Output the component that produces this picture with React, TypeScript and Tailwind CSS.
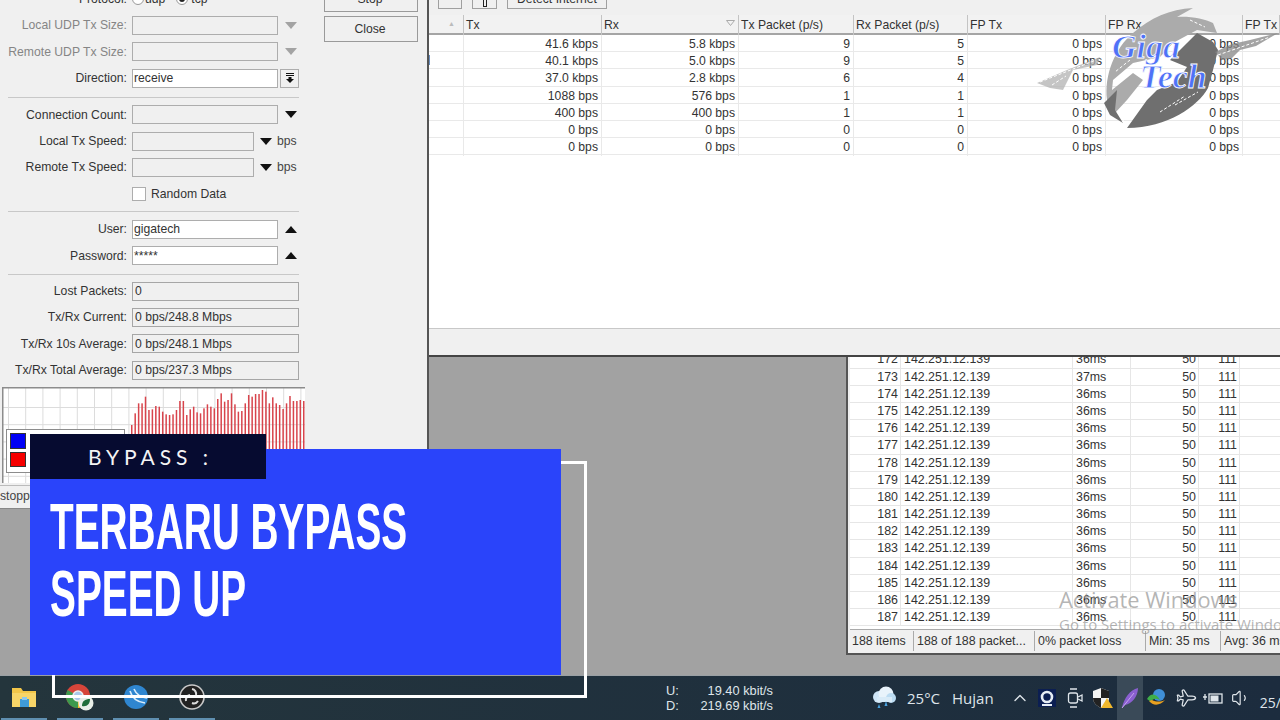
import { ChevronUp, Plane, Volume1 } from "lucide-react";

const trafficRows = [
  ["41.6 kbps", "5.8 kbps", "9", "5", "0 bps", "0 bps"],
  ["40.1 kbps", "5.0 kbps", "9", "5", "0 bps", "0 bps"],
  ["37.0 kbps", "2.8 kbps", "6", "4", "0 bps", "0 bps"],
  ["1088 bps", "576 bps", "1", "1", "0 bps", "0 bps"],
  ["400 bps", "400 bps", "1", "1", "0 bps", "0 bps"],
  ["0 bps", "0 bps", "0", "0", "0 bps", "0 bps"],
  ["0 bps", "0 bps", "0", "0", "0 bps", "0 bps"],
];

const pingRows = Array.from({ length: 16 }, (_, i) => ({
  seq: 172 + i,
  time: i === 1 ? "37ms" : "36ms",
}));

const barTops = [
  135, 100, 70, 70, 50, 90, 88, 78, 80, 95, 103, 105, 103, 90, 63, 63, 105, 88, 80, 97, 100, 85, 73, 80, 85, 57,
  40, 65, 60, 40, 73, 95, 93, 70, 45, 50, 42, 42, 30, 35, 70, 52, 70, 75, 87, 70, 48, 63, 63, 60, 63,
];

function Label({ children, muted }: { children: string; muted?: boolean }) {
  return (
    <span className={`w-[127px] shrink-0 whitespace-nowrap text-right ${muted ? "text-[#858585]" : "text-[#333]"}`}>
      {children}
    </span>
  );
}

function Arrow({ up, muted }: { up?: boolean; muted?: boolean }) {
  return (
    <svg width="12" height="7" viewBox="0 0 12 7" className="shrink-0">
      <path d={up ? "M0 7L6 0L12 7Z" : "M0 0L12 0L6 7Z"} fill={muted ? "#a3a3a3" : "#111"} />
    </svg>
  );
}

function FieldRow({
  label,
  value,
  muted,
  short,
  arrow,
  up,
}: {
  label: string;
  value?: string;
  muted?: boolean;
  short?: boolean;
  arrow?: boolean;
  up?: boolean;
}) {
  const filled = value !== undefined;
  return (
    <div className="flex h-[26.4px] items-center">
      <Label muted={muted}>{label}</Label>
      <div
        className={`ml-[5px] flex h-[19px] items-center border border-[#adadad] pl-[1px] ${short ? "w-[122px]" : "w-[146px]"} ${filled ? "bg-white" : "bg-[#f0f0f0]"}`}
      >
        {value}
      </div>
      {arrow && (
        <span className={short ? "ml-[6px]" : "ml-[7px]"}>
          <Arrow up={up} muted={muted} />
        </span>
      )}
      {short && <span className="ml-[5px] text-[#444]">bps</span>}
    </div>
  );
}

function ReadRow({ label, value }: { label: string; value: string }) {
  return (
    <div className="flex h-[26.4px] items-center">
      <Label>{label}</Label>
      <div className="ml-[5px] flex h-[19px] w-[167px] items-center border border-[#a6a6a6] bg-[#f0f0f0] pl-[2px] text-[#333]">
        {value}
      </div>
    </div>
  );
}

function Separator({ className }: { className: string }) {
  return <div className={`ml-[8px] h-px w-[291px] bg-[#c8c8c8] ${className}`} />;
}

function TrafficChart() {
  return (
    <svg width="303" height="96" viewBox="0 0 303 96" className="ml-[2px] mt-[4px] block bg-white">
      {Array.from({ length: 18 }, (_, i) => (
        <line key={i} x1={6.5 + i * 17.2} x2={6.5 + i * 17.2} y1="0" y2="96" stroke="#dcdcdc" />
      ))}
      {Array.from({ length: 5 }, (_, i) => (
        <line key={i} x1="0" x2="303" y1={20.5 + i * 17.2} y2={20.5 + i * 17.2} stroke="#dcdcdc" />
      ))}
      {barTops.map((top, i) => (
        <rect key={i} x={129 + i * 3.44} y={top / 3 - 7} width="1.5" height={96 - top / 3 + 7} fill="#d8444c" />
      ))}
      <rect x="1" y="0" width="302" height="1.5" fill="#8c8c8c" />
      <rect x="0" y="0" width="1.5" height="96" fill="#8c8c8c" />
      <rect x="4.5" y="42.5" width="118" height="43" fill="#fff" stroke="#8c8c8c" />
      <rect x="8.5" y="46.5" width="15" height="15" fill="#0000f5" stroke="#333" />
      <rect x="8.5" y="65.5" width="15" height="14" fill="#f50000" stroke="#333" />
    </svg>
  );
}

function LeftWindow() {
  return (
    <div className="absolute left-0 top-0 flex h-[509px] w-[429px] overflow-hidden border-b border-r-2 border-b-[#888] border-r-[#555] bg-[#f0f0f0] text-[12.2px] text-[#333]">
      <div className="w-[305px] shrink-0">
        <div className="-mt-[14px] flex h-[26.4px] items-center">
          <Label>Protocol:</Label>
          <span className="ml-[5px] h-[12px] w-[12px] rounded-full border border-[#999] bg-white" />
          <span className="ml-[1px]">udp</span>
          <span className="ml-[11px] flex h-[12px] w-[12px] items-center justify-center rounded-full border border-[#999] bg-white">
            <span className="h-[6px] w-[6px] rounded-full bg-[#222]" />
          </span>
          <span className="ml-[3px]">tcp</span>
        </div>
        <FieldRow label="Local UDP Tx Size:" muted arrow />
        <FieldRow label="Remote UDP Tx Size:" muted arrow />
        <div className="flex h-[26.4px] items-center">
          <Label>Direction:</Label>
          <div className="ml-[5px] flex h-[19px] w-[146px] items-center border border-[#adadad] bg-white pl-[1px]">
            receive
          </div>
          <div className="ml-[2px] flex h-[19px] w-[19px] items-center justify-center border border-[#adadad]">
            <svg width="10" height="10" viewBox="0 0 10 10">
              <path d="M1 0.5H9M1 2.5H9" stroke="#111" />
              <path d="M3.5 4H6.5V6H9L5 10L1 6H3.5Z" fill="#111" />
            </svg>
          </div>
        </div>
        <Separator className="mb-[4px] mt-[5px]" />
        <FieldRow label="Connection Count:" arrow />
        <FieldRow label="Local Tx Speed:" short arrow />
        <FieldRow label="Remote Tx Speed:" short arrow />
        <div className="flex h-[26.4px] items-center pl-[132px]">
          <span className="h-[14px] w-[14px] border border-[#adadad] bg-white" />
          <span className="ml-[5px]">Random Data</span>
        </div>
        <Separator className="mb-[4px] mt-[4px]" />
        <FieldRow label="User:" value="gigatech" arrow up />
        <FieldRow label="Password:" value="*****" arrow up />
        <Separator className="mb-[3px] mt-[5px]" />
        <ReadRow label="Lost Packets:" value="0" />
        <ReadRow label="Tx/Rx Current:" value="0 bps/248.8 Mbps" />
        <ReadRow label="Tx/Rx 10s Average:" value="0 bps/248.1 Mbps" />
        <ReadRow label="Tx/Rx Total Average:" value="0 bps/237.3 Mbps" />
        <TrafficChart />
        <div className="mt-[2px] border-t border-[#bbb] leading-[20px] text-[#444]">stopped</div>
      </div>
      <div className="ml-[19px] flex w-[94px] shrink-0 flex-col gap-[4px]">
        <button className="-mt-[14px] h-[26px] border border-[#9a9a9a] bg-[#f0f0f0] pr-[2px] text-center">Stop</button>
        <button className="h-[26px] border border-[#9a9a9a] bg-[#f0f0f0] pr-[2px] text-center">Close</button>
      </div>
    </div>
  );
}

const headers = ["Tx", "Rx", "Tx Packet (p/s)", "Rx Packet (p/s)", "FP Tx", "FP Rx", "FP Tx"];
const cols = "grid grid-cols-[35px_138px_137px_115px_114px_138px_137px_37px]";

function TopWindow() {
  return (
    <div className="absolute left-[429px] top-0 flex h-[357px] w-[851px] flex-col overflow-hidden border-b-2 border-[#444] bg-[#f0f0f0] text-[12.2px] text-[#333]">
      <div className="flex h-[15px] items-end gap-[10px] pb-[6px] pl-[9px]">
        <div className="h-[24px] w-[24px] shrink-0 border border-[#a0a0a0]" />
        <div className="flex h-[24px] w-[25px] shrink-0 items-end justify-center border border-[#a0a0a0]">
          <span className="mb-[1px] h-[8px] w-[4px] border border-[#222]" />
        </div>
        <div className="flex h-[24px] w-[100px] shrink-0 items-end justify-center border border-[#a0a0a0] pb-[2px] leading-[14px]">
          Detect Internet
        </div>
      </div>
      <div className="flex h-[313px] flex-col bg-white">
        <div className={`${cols} h-[20px] border-b-2 border-[#a5a5a5] bg-[#f2f2f2] leading-[20px]`}>
          <div className="relative border-r border-[#c4c4c4]">
            <span className="absolute right-[8px] top-[5px] text-[7px] leading-none text-[#bbb]">▲</span>
          </div>
          {headers.map((h, i) => (
            <div key={i} className="relative whitespace-nowrap border-r border-[#c4c4c4] pl-[2px]">
              {h}
              {i === 1 && (
                <svg width="9" height="6" viewBox="0 0 9 6" className="absolute right-[3px] top-[5px]">
                  <path d="M0.5 0.5H8.5L4.5 5.5Z" fill="none" stroke="#aaa" />
                </svg>
              )}
            </div>
          ))}
        </div>
        {trafficRows.map((row, r) => (
          <div key={r} className={`${cols} h-[17.2px] border-b border-[#e9e9e9] leading-[18px]`}>
            <div className="relative border-r border-[#e9e9e9]">
              {r === 1 && <span className="absolute -left-[1px] top-[3px] h-[10px] w-[2px] bg-[#6a8fc0]" />}
            </div>
            {row.map((cell, i) => (
              <div key={i} className="border-r border-[#e9e9e9] pr-[3px] text-right">
                {cell}
              </div>
            ))}
            <div />
          </div>
        ))}
      </div>
      <div className="flex-1 border-t border-[#c8c8c8]" />
    </div>
  );
}

function PingWindow() {
  return (
    <div className="absolute left-[846px] top-[357px] flex h-[298px] w-[434px] flex-col overflow-hidden border-b-2 border-l-2 border-[#555] bg-[#f0f0f0] pl-[2px] text-[12.4px] text-[#333]">
      <div className="h-[272px] shrink-0 overflow-hidden bg-white">
        <div className="-mt-[5.6px]">
          {pingRows.map((row) => (
            <div
              key={row.seq}
              className="grid h-[17.2px] grid-cols-[51px_172px_58px_68px_41px] border-b border-[#e6e6e6] leading-[17px]"
            >
              <div className="border-r border-[#e6e6e6] pr-[2px] text-right">{row.seq}</div>
              <div className="border-r border-[#e6e6e6] pl-[3px]">142.251.12.139</div>
              <div className="border-r border-[#e6e6e6] pl-[3px]">{row.time}</div>
              <div className="border-r border-[#e6e6e6] pr-[2px] text-right">50</div>
              <div className="border-r border-[#e6e6e6] pr-[2px] text-right">111</div>
            </div>
          ))}
        </div>
      </div>
      <div className="flex h-[22px] items-center border-t border-[#aaa] leading-[20px] text-[#333]">
        <span className="w-[64px] shrink-0 whitespace-nowrap border-r border-[#aaa] pl-[2px]">188 items</span>
        <span className="w-[121px] shrink-0 whitespace-nowrap border-r border-[#aaa] pl-[3px]">188 of 188 packet...</span>
        <span className="w-[111px] shrink-0 whitespace-nowrap border-r border-[#aaa] pl-[3px]">0% packet loss</span>
        <span className="w-[75px] shrink-0 whitespace-nowrap border-r border-[#aaa] pl-[3px]">Min: 35 ms</span>
        <span className="whitespace-nowrap pl-[3px]">Avg: 36 ms</span>
      </div>
    </div>
  );
}

function Watermark() {
  return (
    <svg viewBox="1030 0 250 135" className="absolute left-[1030px] top-0 h-[135px] w-[250px]">
      <path
        d="M1107 100C1104 75 1115 48 1133 33C1150 18 1170 9 1193 8L1177 17C1190 16 1205 19 1213 23L1217 33L1197 30L1173 43L1160 57L1133 63L1113 80L1112 90L1133 73L1143 80L1127 100L1115 113Z"
        fill="#ababab"
      />
      <path d="M1037 83L1067 70L1100 57L1097 65L1073 70L1063 90L1050 88Z" fill="#b2b2b2" opacity="0.75" />
      <path
        d="M1127 128L1147 100L1157 90L1177 82L1187 67L1170 60L1187 43L1197 33L1213 42L1218 50L1213 70L1208 88C1198 106 1168 128 1127 128Z"
        fill="#6f6f6f"
      />
      <path d="M1104 103L1117 90L1115 110L1123 123L1110 115Z" fill="#6f6f6f" />
      <path d="M1215 52L1232 44L1250 40L1278 33L1256 46L1240 50L1232 58L1222 60Z" fill="#858585" opacity="0.75" />
      <path
        d="M1040 82L1096 60M1052 85L1066 76M1218 55L1270 37M1122 122L1142 96L1152 88M1130 60L1115 72M1190 20L1205 27M1175 105L1198 92M1160 112L1185 96"
        stroke="#fff"
        strokeWidth="1"
        strokeDasharray="3 2"
        fill="none"
      />
      <g
        fontFamily="'Liberation Serif', serif"
        fontWeight="700"
        fontStyle="italic"
        fontSize="34"
        fill="#4f72f7"
        stroke="#fff"
        strokeWidth="0.8"
      >
        <text x="1112" y="58">
          Giga
        </text>
        <text x="1140" y="88">
          Tech
        </text>
      </g>
    </svg>
  );
}

function ActivateNotice() {
  return (
    <div className="absolute left-[1059px] top-[586px] whitespace-nowrap font-['Open_Sans',sans-serif] text-[#949494]/70">
      <div className="text-[21.8px] leading-[28px]">Activate Windows</div>
      <div className="text-[15px] leading-[20px]">Go to Settings to activate Windows.</div>
    </div>
  );
}

function Thumbnail() {
  return (
    <>
      <div className="absolute left-[52px] top-[461px] h-[237px] w-[535px] border-[3px] border-white" />
      <div className="absolute left-[30px] top-[449px] h-[226px] w-[531px] bg-[#2a44fa] pl-[20px] pt-[44px]">
        <h1 className="origin-left scale-x-[0.597] whitespace-nowrap font-['Liberation_Sans',sans-serif] text-[65px] font-bold leading-[67px] text-white">
          TERBARU BYPASS
          <br />
          SPEED UP
        </h1>
      </div>
      <div className="absolute left-[30px] top-[434px] flex h-[45px] w-[236px] items-center bg-[#060b30] pl-[58px] font-['Lato',sans-serif] text-[21px] tracking-[0.235em] text-[#f4f4f4]">
        BYPASS :
      </div>
    </>
  );
}

function TaskIcon({ children }: { children: React.ReactNode }) {
  return (
    <div className="flex w-[46px] shrink-0 flex-col items-center justify-between self-stretch">
      <div className="mt-[8px] flex h-[26px] items-center justify-center">{children}</div>
      <div className="h-[2px] w-full bg-[#5f8fb0]" />
    </div>
  );
}

function Taskbar() {
  return (
    <div className="absolute bottom-0 left-0 flex h-[45px] w-[1280px] items-center border-t border-[#9aa0a4] bg-gradient-to-r from-[#24353c] to-[#1c2c3e] text-[#dfe5ea]">
      <div className="flex h-full shrink-0 gap-[10px] pl-[1px]">
        <TaskIcon>
          <svg width="26" height="22" viewBox="0 0 26 22">
            <path d="M1 2H10L12 5H25V21H1Z" fill="#f3c649" />
            <rect x="1" y="7" width="24" height="14" fill="#f8d568" />
            <rect x="9" y="13" width="9" height="8" fill="#3f9bd8" />
            <rect x="11" y="11" width="5" height="3" fill="#8cc7ee" />
          </svg>
        </TaskIcon>
        <TaskIcon>
          <svg width="30" height="28" viewBox="0 0 30 28">
            <circle cx="13" cy="13" r="12" fill="#d6453a" />
            <path d="M13 13L2.6 7A12 12 0 0 0 13 25Z" fill="#3c9a4e" />
            <path d="M13 13L25 13A12 12 0 0 1 13 25Z" fill="#f1c232" />
            <circle cx="13" cy="13" r="5" fill="#a9c8ea" stroke="#eee" strokeWidth="1.5" />
            <circle cx="21" cy="20" r="7.5" fill="#e8efe8" />
            <path d="M17 23C17 18 20 16 25 16C25 21 22 24 17 23Z" fill="#1f6e3a" />
          </svg>
        </TaskIcon>
        <TaskIcon>
          <svg width="24" height="24" viewBox="0 0 24 24">
            <circle cx="12" cy="12" r="12" fill="#2f86d0" />
            <path d="M6 6C8 13 13 17 21 18M10 4C12 9 15 12 23 13" stroke="#d8ecfb" strokeWidth="1.6" fill="none" />
          </svg>
        </TaskIcon>
        <TaskIcon>
          <svg width="26" height="26" viewBox="0 0 26 26">
            <circle cx="13" cy="13" r="12" fill="#222" stroke="#c9c9c9" strokeWidth="1.6" />
            <path d="M13 5A5 5 0 0 1 17 11M7 17A5 5 0 0 1 11 11M19 17A5 5 0 0 1 13 19" stroke="#ddd" strokeWidth="2" fill="none" />
          </svg>
        </TaskIcon>
      </div>
      <div className="ml-[451px] w-[107px] shrink-0 text-[12.8px] leading-[15px]">
        <div className="flex justify-between">
          <span>U:</span>
          <span>19.40 kbit/s</span>
        </div>
        <div className="flex justify-between">
          <span>D:</span>
          <span>219.69 kbit/s</span>
        </div>
      </div>
      <svg width="26" height="24" viewBox="0 0 26 24" className="ml-[98px] shrink-0">
        <circle cx="8" cy="11" r="6" fill="#cfe6f7" />
        <circle cx="15" cy="8" r="7.5" fill="#e8f3fb" />
        <circle cx="20" cy="12" r="5" fill="#bcdcf2" />
        <rect x="6" y="11" width="15" height="5" fill="#d8ebf8" />
        <path d="M8 18L9.5 22H6.5ZM15 15L16.5 20H13.5Z" fill="#4aa3e0" />
      </svg>
      <span className="ml-[10px] shrink-0 font-['Open_Sans',sans-serif] text-[15px]">25°C</span>
      <span className="ml-[12px] shrink-0 font-['Open_Sans',sans-serif] text-[15px]">Hujan</span>
      <ChevronUp className="ml-[16px] h-[20px] w-[20px] shrink-0" strokeWidth={1.6} />
      <div className="ml-[3px] flex h-full shrink-0 items-center">
        <div className="flex w-[28px] justify-center">
          <svg width="18" height="18" viewBox="0 0 18 18" className="bg-[#0b1e52]">
            <circle cx="9" cy="8" r="5" fill="none" stroke="#e6edf5" strokeWidth="2.6" />
            <path d="M4 16H14" stroke="#e6edf5" strokeWidth="2" />
          </svg>
        </div>
        <div className="flex w-[28px] justify-center">
          <svg width="16" height="20" viewBox="0 0 16 20" fill="none" stroke="#dfe5ea" strokeWidth="1.3">
            <path d="M3 1H10M3 19H10" />
            <rect x="1.5" y="5" width="9" height="10" rx="2" />
            <path d="M11 9L15 7V13L11 11" />
          </svg>
        </div>
        <div className="flex w-[28px] justify-center">
          <svg width="22" height="20" viewBox="0 0 22 20">
            <path d="M1 3L9 0L17 3V10C17 15 13 18 9 20C5 18 1 15 1 10Z" fill="#f4f4f4" />
            <path d="M9 0L17 3V10H9ZM1 10H9V20C5 18 1 15 1 10Z" fill="#222" />
            <path d="M15 10L21 20H9Z" fill="#f1b82d" />
          </svg>
        </div>
        <div className="flex h-full w-[26px] items-center justify-center bg-[#3a4a58]">
          <svg width="18" height="22" viewBox="0 0 18 22">
            <path d="M1 21C3 11 9 3 17 1C17 9 11 17 4 18Z" fill="#8a5fd0" />
            <path d="M1 21L13 6" stroke="#c4a4ec" />
          </svg>
        </div>
        <div className="flex w-[28px] justify-center">
          <svg width="20" height="18" viewBox="0 0 20 18">
            <circle cx="12" cy="6" r="6" fill="#3f8fd8" />
            <path d="M0 10C4 3 10 5 13 11C9 9 6 9 4 13Z" fill="#3fae49" />
            <path d="M2 12C6 17 13 17 18 11C14 13 9 13 5 11Z" fill="#e8a020" />
          </svg>
        </div>
        <div className="flex w-[28px] justify-center">
          <Plane className="h-[20px] w-[20px] rotate-45" strokeWidth={1.5} />
        </div>
        <div className="flex w-[28px] justify-center">
          <svg width="20" height="12" viewBox="0 0 20 12" fill="none" stroke="#dfe5ea" strokeWidth="1.3">
            <rect x="6" y="2" width="13" height="9" />
            <rect x="7.5" y="3.5" width="8" height="6" fill="#dfe5ea" stroke="none" />
            <path d="M0 5H4M2 2V8" />
          </svg>
        </div>
        <div className="flex w-[28px] justify-center">
          <Volume1 className="h-[20px] w-[20px]" strokeWidth={1.4} />
        </div>
      </div>
      <span className="ml-[5px] mt-[9px] shrink-0 whitespace-nowrap font-['Open_Sans',sans-serif] text-[14px]">25/</span>
    </div>
  );
}

export default function App() {
  return (
    <div className="relative h-[720px] w-[1280px] overflow-hidden bg-[#a2a2a2] font-['Liberation_Sans',sans-serif]">
      <TopWindow />
      <PingWindow />
      <LeftWindow />
      <Watermark />
      <ActivateNotice />
      <Taskbar />
      <Thumbnail />
    </div>
  );
}
